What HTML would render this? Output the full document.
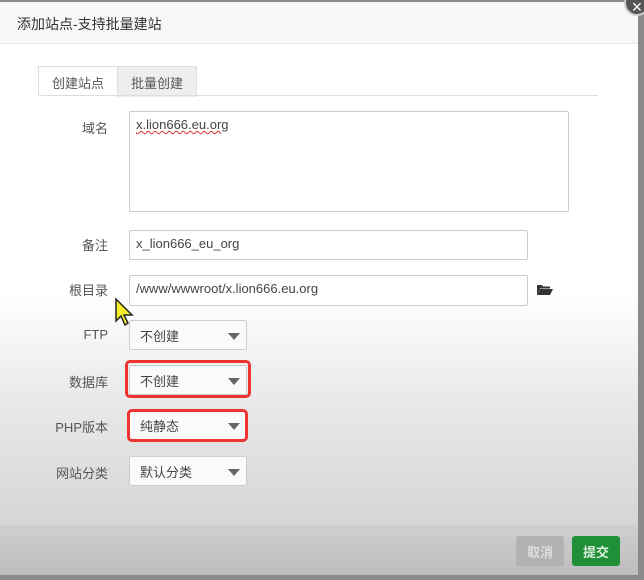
<!DOCTYPE html>
<html><head><meta charset="utf-8"><style>
*{box-sizing:border-box;margin:0;padding:0}
body{width:644px;height:580px;overflow:hidden;background:#8a8a8a;font-family:"Liberation Sans","Noto Sans CJK SC",sans-serif;font-size:13px;color:#555;position:relative}
.dlg{position:absolute;left:0;top:2px;width:638px;height:573px;background:linear-gradient(#fff 0,#fff 290px,#e9e9e9 400px,#d6d6d6 520px);overflow:hidden}
.hd{position:absolute;left:0;top:0;width:638px;height:42px;background:#f7f7f7;border-bottom:1px solid #eaeaea;font-size:14px;color:#333;padding:12px 0 0 17px}
.ft{position:absolute;left:0;top:523px;width:638px;height:50px;background:linear-gradient(#cfcfcf,#bdbdbd)}
.a{position:absolute}
.lbl{position:absolute;text-align:right;width:80px;left:28px;color:#555}
.in{position:absolute;background:#fff;border:1px solid #ccc;border-radius:2px;color:#444;padding:5px 6px}
.sel{position:absolute;left:129px;width:118px;height:30px;border:1px solid #ccc;border-radius:2px;background:#fafafa;padding:5px 10px;color:#444}
.sel:after{content:"";position:absolute;right:6px;top:12px;border-left:6px solid transparent;border-right:6px solid transparent;border-top:7px solid #666}
.red{position:absolute;border:3px solid #e33;border-radius:5px}
</style></head><body>
<div class="dlg">
<div class="hd">添加站点-支持批量建站</div>
<div class="a" style="left:38px;top:64px;width:80px;height:31px;background:#fff;border:1px solid #ddd;border-bottom:none;text-align:center;padding-top:6px">创建站点</div>
<div class="a" style="left:117px;top:64px;width:80px;height:31px;background:#eee;border:1px solid #ddd;border-bottom:none;text-align:center;padding-top:6px">批量创建</div>
<div class="a" style="left:38px;top:93px;width:560px;border-top:1px solid #ddd"></div>
<div class="lbl" style="top:116px">域名</div>
<div class="in" style="left:129px;top:109px;width:440px;height:101px;padding-top:5px"><span style="text-decoration:underline wavy #d33;text-decoration-thickness:1px">x.lion666.eu.org</span></div>
<div class="lbl" style="top:233px">备注</div>
<div class="in" style="left:129px;top:228px;width:399px;height:30px">x_lion666_eu_org</div>
<div class="lbl" style="top:278px">根目录</div>
<div class="in" style="left:129px;top:273px;width:399px;height:31px">/www/wwwroot/x.lion666.eu.org</div>
<svg class="a" style="left:537px;top:281px" width="16" height="13" viewBox="0 0 16 13"><path d="M0 2h5l1 1.5h7v2H3L0 12z" fill="#333"/><path d="M3 6h13l-3 6H0z" fill="#333"/></svg>
<svg class="a" style="left:114px;top:295px" width="22" height="30" viewBox="0 0 22 30"><path d="M2 2L2 24L7 19L11 28L14 26L10 18L18 18Z" fill="#f5ef2a" stroke="#222" stroke-width="1.5"/></svg>
<div class="lbl" style="top:325px">FTP</div>
<div class="sel" style="top:318px">不创建</div>
<div class="lbl" style="top:370px">数据库</div>
<div class="sel" style="top:363px">不创建</div>
<div class="red" style="left:125px;top:358px;width:126px;height:38px"></div>
<div class="lbl" style="top:415px">PHP版本</div>
<div class="sel" style="top:408px">纯静态</div>
<div class="red" style="left:127px;top:407px;width:121px;height:33px"></div>
<div class="lbl" style="top:461px">网站分类</div>
<div class="sel" style="top:454px">默认分类</div>
<div class="ft"></div>
<div class="a" style="left:516px;top:534px;width:48px;height:30px;background:#b2b2b2;border-radius:3px;color:#ddd;text-align:center;padding-top:6px;font-weight:bold">取消</div>
<div class="a" style="left:572px;top:534px;width:48px;height:30px;background:#1f8f38;border-radius:3px;color:#dfeee0;text-align:center;padding-top:6px;font-weight:bold">提交</div>
</div>
<div class="a" style="left:624px;top:-10px;width:26px;height:26px;border-radius:50%;background:#555;border:2px solid #ccc;color:#fff;font-size:18px;text-align:center;line-height:30px">×</div>
</body></html>
